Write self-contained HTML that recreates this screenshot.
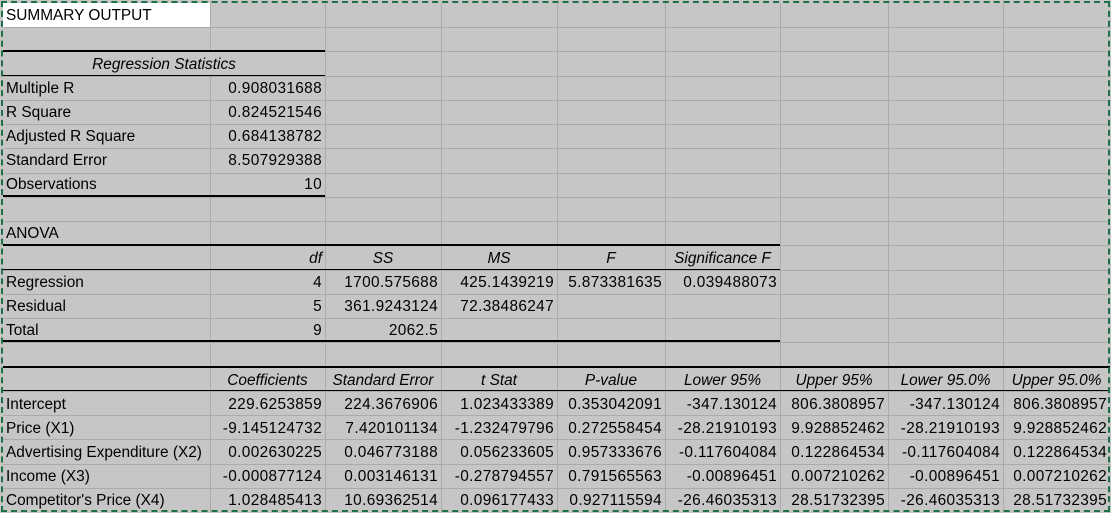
<!DOCTYPE html><html><head><style>
body{margin:0;width:1120px;height:516px;background:#fff;position:relative;overflow:hidden;font-family:"Liberation Sans",sans-serif;color:#000}
#g{position:absolute;left:0;top:0;width:1111px;height:513px;background:#c6c6c6}
.v{position:absolute;top:3px;height:509px;width:1px;background:#ababab}
.h{position:absolute;left:3px;width:1107px;height:1px;background:#ababab}
.t{position:absolute;height:2px;background:#000}
.n{position:absolute;height:1px;background:#000}
.c{position:absolute;height:24px;line-height:25px;font-size:15.4px;white-space:nowrap;padding:0 3px;box-sizing:border-box}
.r{text-align:right;letter-spacing:0.35px}.i{font-style:italic;text-align:center}
#sel{position:absolute;left:1px;top:1px;width:1109px;height:511px;border:2px dashed #1e7145;box-sizing:border-box}
</style></head><body><div id="g">
<div class="v" style="left:210px"></div><div class="v" style="left:325px"></div><div class="v" style="left:441px"></div><div class="v" style="left:557px"></div><div class="v" style="left:665px"></div><div class="v" style="left:780px"></div><div class="v" style="left:888px"></div><div class="v" style="left:1003px"></div>
<div class="h" style="top:27px"></div><div class="h" style="top:51px"></div><div class="h" style="top:76px"></div><div class="h" style="top:100px"></div><div class="h" style="top:124px"></div><div class="h" style="top:148px"></div><div class="h" style="top:173px"></div><div class="h" style="top:197px"></div><div class="h" style="top:221px"></div><div class="h" style="top:245px"></div><div class="h" style="top:270px"></div><div class="h" style="top:294px"></div><div class="h" style="top:318px"></div><div class="h" style="top:342px"></div><div class="h" style="top:367px"></div><div class="h" style="top:391px"></div><div class="h" style="top:415px"></div><div class="h" style="top:439px"></div><div class="h" style="top:464px"></div><div class="h" style="top:488px"></div>
<div style="position:absolute;left:3px;top:3px;width:207px;height:24px;background:#fff"></div>
<div style="position:absolute;left:3px;top:52px;width:322px;height:24px;background:#c6c6c6"></div>
<div class="t" style="left:3px;top:50px;width:322px"></div><div class="n" style="left:3px;top:75px;width:322px"></div><div class="t" style="left:3px;top:195px;width:322px"></div>
<div class="t" style="left:3px;top:244px;width:777px"></div><div class="n" style="left:3px;top:269px;width:777px"></div><div class="t" style="left:3px;top:340px;width:777px"></div>
<div class="t" style="left:3px;top:366px;width:1107px"></div><div class="n" style="left:3px;top:390px;width:1107px"></div>

<div class="c" style="left:3px;top:3px">SUMMARY OUTPUT</div>
<div class="c i" style="left:3px;top:52px;width:322px">Regression Statistics</div>
<div class="c" style="left:3px;top:76px">Multiple R</div><div class="c r" style="left:210px;top:76px;width:115px">0.908031688</div>
<div class="c" style="left:3px;top:100px">R Square</div><div class="c r" style="left:210px;top:100px;width:115px">0.824521546</div>
<div class="c" style="left:3px;top:124px">Adjusted R Square</div><div class="c r" style="left:210px;top:124px;width:115px">0.684138782</div>
<div class="c" style="left:3px;top:148px">Standard Error</div><div class="c r" style="left:210px;top:148px;width:115px">8.507929388</div>
<div class="c" style="left:3px;top:172px">Observations</div><div class="c r" style="left:210px;top:172px;width:115px">10</div>

<div class="c" style="left:3px;top:221px">ANOVA</div>
<div class="c i" style="left:210px;top:246px;width:115px;text-align:right">df</div>
<div class="c i" style="left:325px;top:246px;width:116px">SS</div>
<div class="c i" style="left:441px;top:246px;width:116px">MS</div>
<div class="c i" style="left:557px;top:246px;width:108px">F</div>
<div class="c i" style="left:665px;top:246px;width:115px">Significance F</div>
<div class="c" style="left:3px;top:270px">Regression</div><div class="c r" style="left:210px;top:270px;width:115px">4</div><div class="c r" style="left:325px;top:270px;width:116px">1700.575688</div><div class="c r" style="left:441px;top:270px;width:116px">425.1439219</div><div class="c r" style="left:557px;top:270px;width:108px">5.873381635</div><div class="c r" style="left:665px;top:270px;width:115px">0.039488073</div>
<div class="c" style="left:3px;top:294px">Residual</div><div class="c r" style="left:210px;top:294px;width:115px">5</div><div class="c r" style="left:325px;top:294px;width:116px">361.9243124</div><div class="c r" style="left:441px;top:294px;width:116px">72.38486247</div>
<div class="c" style="left:3px;top:318px">Total</div><div class="c r" style="left:210px;top:318px;width:115px">9</div><div class="c r" style="left:325px;top:318px;width:116px">2062.5</div>

<div class="c i" style="left:210px;top:368px;width:115px">Coefficients</div>
<div class="c i" style="left:325px;top:368px;width:116px">Standard Error</div>
<div class="c i" style="left:441px;top:368px;width:116px">t Stat</div>
<div class="c i" style="left:557px;top:368px;width:108px">P-value</div>
<div class="c i" style="left:665px;top:368px;width:115px">Lower 95%</div>
<div class="c i" style="left:780px;top:368px;width:108px">Upper 95%</div>
<div class="c i" style="left:888px;top:368px;width:115px">Lower 95.0%</div>
<div class="c i" style="left:1003px;top:368px;width:107px">Upper 95.0%</div>

<div class="c" style="left:3px;top:392px">Intercept</div><div class="c r" style="left:210px;top:392px;width:115px">229.6253859</div><div class="c r" style="left:325px;top:392px;width:116px">224.3676906</div><div class="c r" style="left:441px;top:392px;width:116px">1.023433389</div><div class="c r" style="left:557px;top:392px;width:108px">0.353042091</div><div class="c r" style="left:665px;top:392px;width:115px">-347.130124</div><div class="c r" style="left:780px;top:392px;width:108px">806.3808957</div><div class="c r" style="left:888px;top:392px;width:115px">-347.130124</div><div class="c r" style="left:1003px;top:392px;width:107px">806.3808957</div>
<div class="c" style="left:3px;top:416px">Price (X1)</div><div class="c r" style="left:210px;top:416px;width:115px">-9.145124732</div><div class="c r" style="left:325px;top:416px;width:116px">7.420101134</div><div class="c r" style="left:441px;top:416px;width:116px">-1.232479796</div><div class="c r" style="left:557px;top:416px;width:108px">0.272558454</div><div class="c r" style="left:665px;top:416px;width:115px">-28.21910193</div><div class="c r" style="left:780px;top:416px;width:108px">9.928852462</div><div class="c r" style="left:888px;top:416px;width:115px">-28.21910193</div><div class="c r" style="left:1003px;top:416px;width:107px">9.928852462</div>
<div class="c" style="left:3px;top:440px">Advertising Expenditure (X2)</div><div class="c r" style="left:210px;top:440px;width:115px">0.002630225</div><div class="c r" style="left:325px;top:440px;width:116px">0.046773188</div><div class="c r" style="left:441px;top:440px;width:116px">0.056233605</div><div class="c r" style="left:557px;top:440px;width:108px">0.957333676</div><div class="c r" style="left:665px;top:440px;width:115px">-0.117604084</div><div class="c r" style="left:780px;top:440px;width:108px">0.122864534</div><div class="c r" style="left:888px;top:440px;width:115px">-0.117604084</div><div class="c r" style="left:1003px;top:440px;width:107px">0.122864534</div>
<div class="c" style="left:3px;top:464px">Income (X3)</div><div class="c r" style="left:210px;top:464px;width:115px">-0.000877124</div><div class="c r" style="left:325px;top:464px;width:116px">0.003146131</div><div class="c r" style="left:441px;top:464px;width:116px">-0.278794557</div><div class="c r" style="left:557px;top:464px;width:108px">0.791565563</div><div class="c r" style="left:665px;top:464px;width:115px">-0.00896451</div><div class="c r" style="left:780px;top:464px;width:108px">0.007210262</div><div class="c r" style="left:888px;top:464px;width:115px">-0.00896451</div><div class="c r" style="left:1003px;top:464px;width:107px">0.007210262</div>
<div class="c" style="left:3px;top:488px">Competitor's Price (X4)</div><div class="c r" style="left:210px;top:488px;width:115px">1.028485413</div><div class="c r" style="left:325px;top:488px;width:116px">10.69362514</div><div class="c r" style="left:441px;top:488px;width:116px">0.096177433</div><div class="c r" style="left:557px;top:488px;width:108px">0.927115594</div><div class="c r" style="left:665px;top:488px;width:115px">-26.46035313</div><div class="c r" style="left:780px;top:488px;width:108px">28.51732395</div><div class="c r" style="left:888px;top:488px;width:115px">-26.46035313</div><div class="c r" style="left:1003px;top:488px;width:107px">28.51732395</div>
</div><div id="sel"></div></body></html>
